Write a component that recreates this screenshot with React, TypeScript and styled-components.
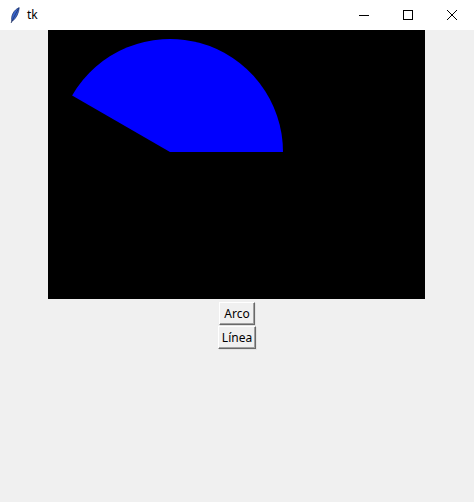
import React from 'react'
import styled, { createGlobalStyle } from 'styled-components'

const GlobalStyle = createGlobalStyle`
    html, body {
        margin: 0;
        padding: 0;
        background: #f0f0f0;
        font-family: "Noto Sans", "Liberation Sans", Arial, sans-serif;
    }
`

const Window = styled.div`
    width: 474px;
    height: 502px;
    display: flex;
    flex-direction: column;
    background: #f0f0f0;
    overflow: hidden;
`

const TitleBar = styled.div`
    height: 30px;
    flex: none;
    background: #ffffff;
    display: flex;
    align-items: center;
`

const AppIcon = styled.div`
    width: 27px;
    display: flex;
    justify-content: center;
    padding-left: 3px;
    box-sizing: border-box;
`

const Title = styled.span`
    font-size: 12px;
    color: #000;
    flex: 1;
    margin-top: -1px;
`

const CaptionButton = styled.div`
    width: 44px;
    height: 30px;
    display: flex;
    align-items: center;
    justify-content: center;
`

const Body = styled.div`
    flex: 1;
    display: flex;
    flex-direction: column;
    align-items: center;
`

const Canvas = styled.svg`
    display: block;
    width: 377px;
    height: 269px;
    background: #000;
    margin: 0 1px 3px 0;
`

const TkButton = styled.button<{ $w: number }>`
    width: ${p => p.$w}px;
    height: 23px;
    padding: 0;
    margin: 0 0 1px 0;
    background: #f0f0f0;
    border: 1px solid;
    border-color: #ffffff #696969 #696969 #ffffff;
    box-shadow: inset -1px -1px 0 #a0a0a0, 1px 1px 0 #e3e3e3;
    font-family: "Noto Sans", "Liberation Sans", Arial, sans-serif;
    font-size: 12px;
    color: #000;
    line-height: 1;
`

const Feather = () => (
    <svg width="10" height="16" viewBox="0 0 10 16">
        <path d="M1.8 14 C0.8 9 3.5 3 9.2 0.6 C9 5.5 6.5 11 2.6 14 Z" fill="#3a66cc" stroke="#1f356e" strokeWidth="0.7" />
        <path d="M8.8 1.2 C6.5 5 4.5 9 2.3 13.6" stroke="#1a2a5c" strokeWidth="0.7" fill="none" />
        <path d="M2.2 13.5 L1.2 15.8" stroke="#1a2a5c" strokeWidth="1" />
    </svg>
)

const App = () => {
    // arc: centre (122,122), r 113, start 0deg, extent 150deg
    const cx = 122
    const cy = 122
    const r = 113
    const a = (150 * Math.PI) / 180
    const ex = cx + r * Math.cos(a)
    const ey = cy - r * Math.sin(a)

    return (
        <>
            <GlobalStyle />
            <Window>
                <TitleBar>
                    <AppIcon><Feather /></AppIcon>
                    <Title>tk</Title>
                    <CaptionButton>
                        <svg width="12" height="12" viewBox="0 0 12 12">
                            <path d="M1 6.5 H11" stroke="#000" strokeWidth="1" />
                        </svg>
                    </CaptionButton>
                    <CaptionButton>
                        <svg width="12" height="12" viewBox="0 0 12 12">
                            <rect x="1.5" y="1.5" width="9" height="9" stroke="#000" strokeWidth="1" fill="none" />
                        </svg>
                    </CaptionButton>
                    <CaptionButton>
                        <svg width="12" height="12" viewBox="0 0 12 12">
                            <path d="M1 1 L11 11 M11 1 L1 11" stroke="#000" strokeWidth="1" />
                        </svg>
                    </CaptionButton>
                </TitleBar>
                <Body>
                    <Canvas viewBox="0 0 377 269">
                        <path
                            d={`M${cx} ${cy} L${cx + r} ${cy} A${r} ${r} 0 0 0 ${ex} ${ey} Z`}
                            fill="#0000ff"
                        />
                    </Canvas>
                    <TkButton $w={36}>Arco</TkButton>
                    <TkButton $w={38}>Línea</TkButton>
                </Body>
            </Window>
        </>
    )
}

export default App
